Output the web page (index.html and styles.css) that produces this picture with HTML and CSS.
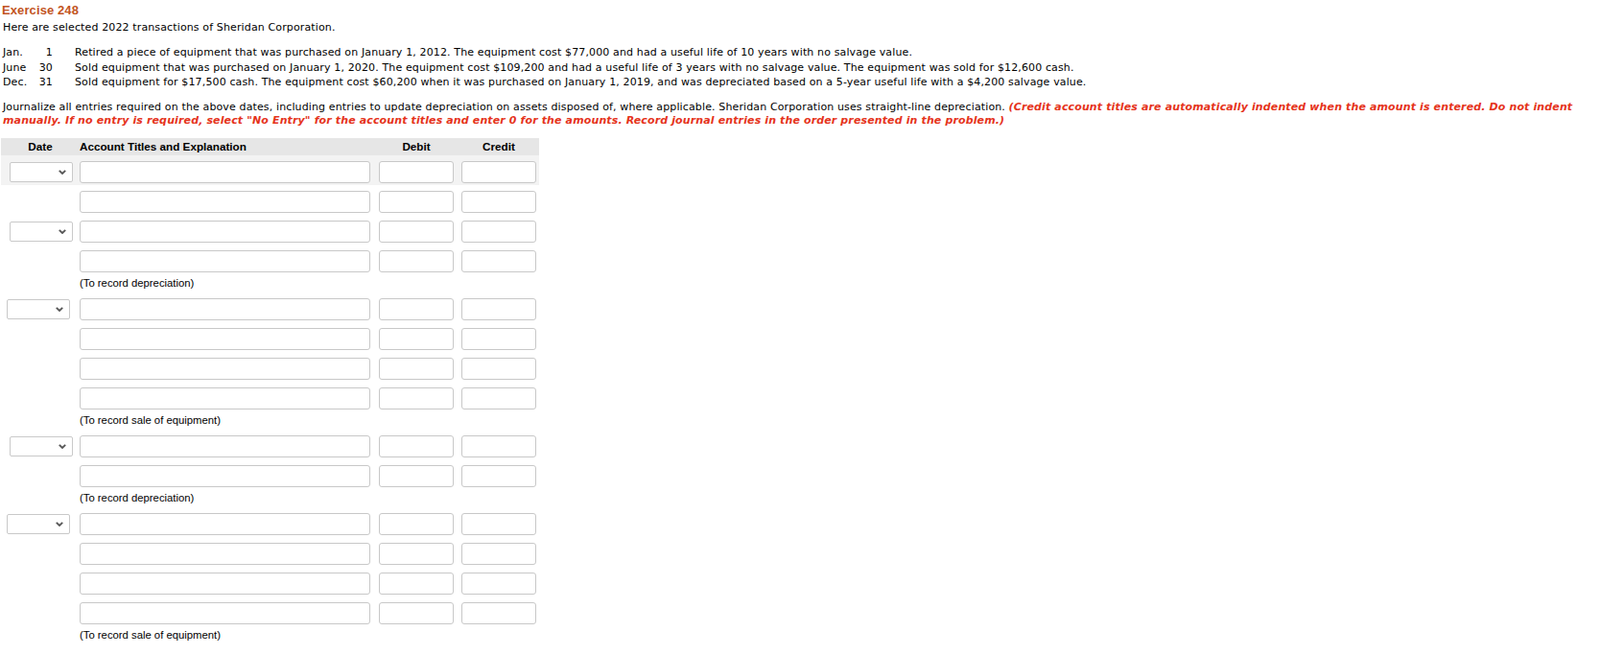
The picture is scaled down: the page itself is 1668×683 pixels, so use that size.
FILE: index.html
```html
<!DOCTYPE html>
<html lang="en">
<head>
    <meta charset="UTF-8">
    <title>Exercise 248</title>
    <link rel="stylesheet" href="styles.css">
</head>
<body>
    <div class="page">
        <div class="title">Exercise 248</div>
        <p class="intro">Here are selected 2022 transactions of Sheridan Corporation.</p>

        <!-- transactions -->
        <div class="transactions">
            <span>Jan.</span><span class="day">1</span>
            <span class="desc">Retired a piece of equipment that was purchased on January 1, 2012. The equipment cost $77,000 and had a useful life of 10 years with no salvage value.</span>
            <span>June</span><span class="day">30</span>
            <span class="desc">Sold equipment that was purchased on January 1, 2020. The equipment cost $109,200 and had a useful life of 3 years with no salvage value. The equipment was sold for $12,600 cash.</span>
            <span>Dec.</span><span class="day">31</span>
            <span class="desc">Sold equipment for $17,500 cash. The equipment cost $60,200 when it was purchased on January 1, 2019, and was depreciated based on a 5-year useful life with a $4,200 salvage value.</span>
        </div>

        <p class="instructions">Journalize all entries required on the above dates, including entries to update depreciation on assets disposed of, where applicable. Sheridan Corporation uses straight-line depreciation. <em class="note">(Credit account titles are automatically indented when the amount is entered. Do not indent manually. If no entry is required, select "No Entry" for the account titles and enter 0 for the amounts. Record journal entries in the order presented in the problem.)</em></p>

        <!-- journal table -->
        <div class="journal">
            <div class="jrow head">
                <div class="h-date">Date</div>
                <div class="h-acct">Account Titles and Explanation</div>
                <div class="h-amt">Debit</div>
                <div class="h-amt">Credit</div>
            </div>

            <!-- Jan 1 -->
            <div class="jrow first">
                <div class="date-select"><svg width="8" height="5" viewBox="0 0 8 5"><path d="M0.8 0.8 L4 4 L7.2 0.8" /></svg></div>
                <input class="acct" type="text"><input class="amt" type="text"><input class="amt" type="text">
            </div>
            <div class="jrow">
                <div></div>
                <input class="acct" type="text"><input class="amt" type="text"><input class="amt" type="text">
            </div>

            <!-- June 30 -->
            <div class="jrow">
                <div class="date-select"><svg width="8" height="5" viewBox="0 0 8 5"><path d="M0.8 0.8 L4 4 L7.2 0.8" /></svg></div>
                <input class="acct" type="text"><input class="amt" type="text"><input class="amt" type="text">
            </div>
            <div class="jrow">
                <div></div>
                <input class="acct" type="text"><input class="amt" type="text"><input class="amt" type="text">
            </div>
            <div class="memo">(To record depreciation)</div>

            <div class="jrow">
                <div class="date-select narrow"><svg width="8" height="5" viewBox="0 0 8 5"><path d="M0.8 0.8 L4 4 L7.2 0.8" /></svg></div>
                <input class="acct" type="text"><input class="amt" type="text"><input class="amt" type="text">
            </div>
            <div class="jrow">
                <div></div>
                <input class="acct" type="text"><input class="amt" type="text"><input class="amt" type="text">
            </div>
            <div class="jrow">
                <div></div>
                <input class="acct" type="text"><input class="amt" type="text"><input class="amt" type="text">
            </div>
            <div class="jrow">
                <div></div>
                <input class="acct" type="text"><input class="amt" type="text"><input class="amt" type="text">
            </div>
            <div class="memo">(To record sale of equipment)</div>

            <!-- Dec 31 -->
            <div class="jrow">
                <div class="date-select"><svg width="8" height="5" viewBox="0 0 8 5"><path d="M0.8 0.8 L4 4 L7.2 0.8" /></svg></div>
                <input class="acct" type="text"><input class="amt" type="text"><input class="amt" type="text">
            </div>
            <div class="jrow">
                <div></div>
                <input class="acct" type="text"><input class="amt" type="text"><input class="amt" type="text">
            </div>
            <div class="memo">(To record depreciation)</div>

            <div class="jrow">
                <div class="date-select narrow"><svg width="8" height="5" viewBox="0 0 8 5"><path d="M0.8 0.8 L4 4 L7.2 0.8" /></svg></div>
                <input class="acct" type="text"><input class="amt" type="text"><input class="amt" type="text">
            </div>
            <div class="jrow">
                <div></div>
                <input class="acct" type="text"><input class="amt" type="text"><input class="amt" type="text">
            </div>
            <div class="jrow">
                <div></div>
                <input class="acct" type="text"><input class="amt" type="text"><input class="amt" type="text">
            </div>
            <div class="jrow">
                <div></div>
                <input class="acct" type="text"><input class="amt" type="text"><input class="amt" type="text">
            </div>
            <div class="memo">(To record sale of equipment)</div>
        </div>
    </div>
</body>
</html>
```

FILE: styles.css
```css
* {
    margin: 0;
    padding: 0;
    box-sizing: border-box;
}
body {
    background: #fff;
    color: #000;
    font-family: "DejaVu Sans", Verdana, sans-serif;
    font-size: 11px;
    letter-spacing: 0.13px;
}
.page {
    padding: 1px 3px 0;
}
.title {
    font-family: "Liberation Sans", Arial, sans-serif;
    font-weight: bold;
    font-size: 13px;
    line-height: 20px;
    letter-spacing: 0.1px;
    color: #c2541f;
    margin-left: -1px;
}
.intro {
    line-height: 16px;
}
/* transactions list */
.transactions {
    display: grid;
    grid-template-columns: 30px 22px 1fr;
    line-height: 15.5px;
    margin-top: 10px;
}
.day {
    text-align: right;
}
.desc {
    margin-left: 23px;
    white-space: nowrap;
}
.instructions {
    margin-top: 11px;
    line-height: 14px;
    width: 1650px;
}
.note {
    color: #e5331b;
    font-weight: bold;
}
/* journal */
.journal {
    margin: 11px 0 0 -2px;
    width: 561px;
}
.jrow {
    display: grid;
    grid-template-columns: 82px 312px 86px 81px;
    align-items: center;
    height: 31px;
    padding: 6px 0 2px;
}
.jrow.head {
    height: 18px;
    padding: 0;
    background: #e6e6e6;
    font-family: "Liberation Sans", Arial, sans-serif;
    font-weight: bold;
    font-size: 11.7px;
    letter-spacing: 0;
    line-height: 18px;
}
.jrow.first {
    background: #f3f3f3;
}
.h-date {
    text-align: center;
}
.h-amt {
    width: 78px;
    text-align: center;
}
.date-select {
    width: 66px;
    height: 21px;
    margin-left: 9px;
    border: 1px solid #c9c9c9;
    border-radius: 2px;
    background: #fff;
    display: flex;
    align-items: center;
    justify-content: flex-end;
    padding-right: 6px;
}
.date-select.narrow {
    margin-left: 6px;
}
.date-select svg path {
    fill: none;
    stroke: #555;
    stroke-width: 1.8;
}
input {
    height: 23px;
    border: 1px solid #c8c8c8;
    border-radius: 3px;
    background: #fff;
    font: inherit;
}
.acct {
    width: 303px;
}
.amt {
    width: 78px;
}
.memo {
    height: 19px;
    padding-left: 82px;
    line-height: 18px;
    font-family: "Liberation Sans", Arial, sans-serif;
    font-size: 11.3px;
    letter-spacing: 0;
}
```
